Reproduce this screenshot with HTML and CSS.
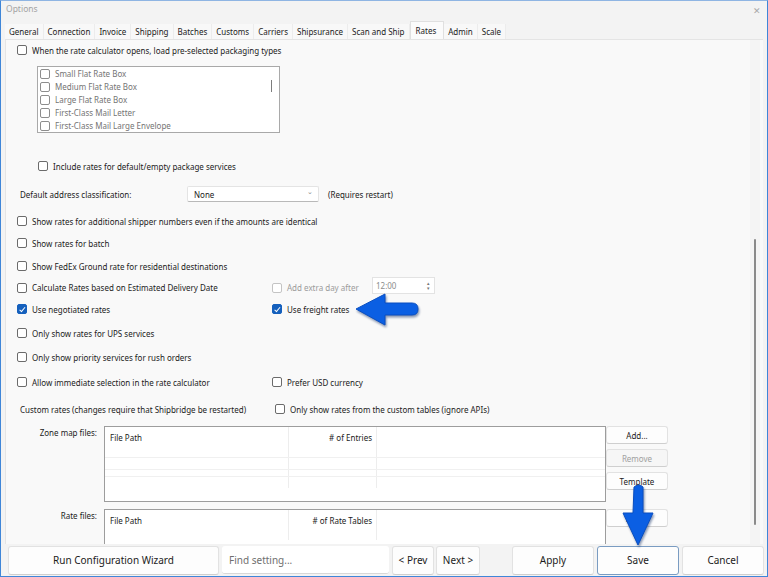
FILE: index.html
```html
<!DOCTYPE html>
<html lang="en">
<head>
    <meta charset="UTF-8">
    <meta name="viewport" content="width=device-width, initial-scale=1.0">
    <title>Options</title>
    <link rel="stylesheet" href="styles.css">
</head>
<body>
<div class="window">
    <div class="titlebar">
        <span class="title">Options</span>
        <span class="close">&#x2715;</span>
    </div>

    <div class="tabs">
        <span class="tab">General</span>
        <span class="tab">Connection</span>
        <span class="tab">Invoice</span>
        <span class="tab">Shipping</span>
        <span class="tab">Batches</span>
        <span class="tab">Customs</span>
        <span class="tab">Carriers</span>
        <span class="tab">Shipsurance</span>
        <span class="tab">Scan and Ship</span>
        <span class="tab active">Rates</span>
        <span class="tab">Admin</span>
        <span class="tab">Scale</span>
    </div>

    <div class="panel">
        <div class="content">
            <label class="row first"><span class="cb"></span>When the rate calculator opens, load pre-selected packaging types</label>

            <div class="listbox">
                <div class="item"><span class="cb"></span>Small Flat Rate Box</div>
                <div class="item"><span class="cb"></span>Medium Flat Rate Box</div>
                <div class="item"><span class="cb"></span>Large Flat Rate Box</div>
                <div class="item"><span class="cb"></span>First-Class Mail Letter</div>
                <div class="item"><span class="cb"></span>First-Class Mail Large Envelope</div>
                <div class="list-thumb"></div>
            </div>

            <label class="row indent mt-lg"><span class="cb"></span>Include rates for default/empty package services</label>

            <div class="row mt-6">
                <span class="field-label">Default address classification:</span>
                <div class="select"><span>None</span><span class="chev">&#x2304;</span></div>
                <span class="hint">(Requires restart)</span>
            </div>

            <label class="row mt-5"><span class="cb"></span>Show rates for additional shipper numbers even if the amounts are identical</label>
            <label class="row"><span class="cb"></span>Show rates for batch</label>
            <label class="row mt-1"><span class="cb"></span>Show FedEx Ground rate for residential destinations</label>

            <div class="row short">
                <label class="col"><span class="cb"></span>Calculate Rates based on Estimated Delivery Date</label>
                <label class="col disabled"><span class="cb"></span>Add extra day after</label>
                <div class="time"><span>12:00</span><span class="spin">&#x25B4;<br>&#x25BE;</span></div>
            </div>

            <div class="row">
                <label class="col"><span class="cb checked"></span>Use negotiated rates</label>
                <label class="col"><span class="cb checked"></span>Use freight rates</label>
            </div>

            <label class="row mt-2"><span class="cb"></span>Only show rates for UPS services</label>
            <label class="row mt-2"><span class="cb"></span>Only show priority services for rush orders</label>

            <div class="row mt-3">
                <label class="col"><span class="cb"></span>Allow immediate selection in the rate calculator</label>
                <label class="col"><span class="cb"></span>Prefer USD currency</label>
            </div>

            <div class="row mt-5">
                <span class="col plain">Custom rates (changes require that Shipbridge be restarted)</span>
                <label class="col"><span class="cb"></span>Only show rates from the custom tables (ignore APIs)</label>
            </div>

            <div class="files mt-6">
                <span class="files-label">Zone map files:</span>
                <div class="grid">
                    <div class="grid-head">
                        <span class="c1">File Path</span>
                        <span class="c2"># of Entries</span>
                        <span class="c3"></span>
                    </div>
                    <div class="grid-row tall"><span class="c1"></span><span class="c2"></span><span class="c3"></span></div>
                    <div class="grid-row"><span class="c1"></span><span class="c2"></span><span class="c3"></span></div>
                    <div class="grid-row short"><span class="c1"></span><span class="c2"></span><span class="c3"></span></div>
                    <div class="grid-row"><span class="c1"></span><span class="c2"></span><span class="c3"></span></div>
                </div>
                <div class="side-buttons">
                    <button class="small">Add...</button>
                    <button class="small" disabled>Remove</button>
                    <button class="small">Template</button>
                </div>
            </div>

            <div class="files mt-7">
                <span class="files-label">Rate files:</span>
                <div class="grid">
                    <div class="grid-head">
                        <span class="c1">File Path</span>
                        <span class="c2"># of Rate Tables</span>
                        <span class="c3"></span>
                    </div>
                    <div class="grid-row tall"><span class="c1"></span><span class="c2"></span><span class="c3"></span></div>
                </div>
                <div class="side-buttons">
                    <button class="small">Add...</button>
                </div>
            </div>
        </div>

        <div class="scrollbar"><div class="thumb"></div></div>
    </div>

    <div class="footer">
        <button class="big wizard">Run Configuration Wizard</button>
        <input class="find" type="text" placeholder="Find setting...">
        <button class="big prev">&lt; Prev</button>
        <button class="big next">Next &gt;</button>
        <span class="spacer"></span>
        <button class="big action">Apply</button>
        <button class="big action save">Save</button>
        <button class="big action">Cancel</button>
    </div>

    <!-- annotation arrows drawn over the dialog -->
    <svg class="arrow arrow-left" width="70" height="40" viewBox="0 0 70 40">
        <path d="M2 18 L31 3 L31 12 L58 12 Q64 12 64 18 Q64 24 58 24 L31 24 L31 34 Z" fill="#0b5fe3" stroke="#0a4fc0" stroke-width="1" stroke-linejoin="round"/>
    </svg>
    <svg class="arrow arrow-down" width="40" height="70" viewBox="0 0 40 70">
        <path d="M17 4 Q22 0 26 4 L26 30 L36 30 L21 62 L6 30 L16 30 Z" fill="#0b5fe3" stroke="#0a4fc0" stroke-width="1" stroke-linejoin="round"/>
    </svg>
</div>
</body>
</html>
```

FILE: styles.css
```css
body{
    margin: 0;
    font-family: "Noto Sans", "Open Sans", sans-serif;
    font-size: 8px;
    color: #1b1b1b;
    background: #f3f3f3;
}
.window{
    position: relative;
    width: 768px;
    height: 577px;
    box-sizing: border-box;
    border: 1px solid #3f86d8;
    border-top-color: #8fb5e3;
    background: #f3f3f3;
    overflow: hidden;
}
.titlebar{
    height: 21px;
    display: flex;
    align-items: flex-start;
    justify-content: space-between;
    padding: 2px 6px 0 5px;
    box-sizing: border-box;
}
.title{
    color: #a3a3a3;
    font-size: 8.5px;
}
.close{
    color: #a8a8a8;
    font-size: 9px;
    margin-top: 1px;
}
.tabs{
    display: flex;
    margin-left: 4px;
    height: 17px;
    align-items: flex-end;
}
.tab{
    height: 15px;
    line-height: 16px;
    padding: 0 4px;
    background: #f8f8f8;
    border-right: 1px solid #ececec;
    color: #222;
}
.tab.active{
    height: 17px;
    line-height: 17px;
    background: #fbfbfb;
    border: 1px solid #e0e0e0;
    border-bottom: none;
    padding: 0 7px 0 5px;
}
.panel{
    display: flex;
    margin-left: 4px;
    width: 758px;
    height: 505px;
    background: #f9f9f9;
    border-top: 1px solid #e4e4e4;
    border-left: 1px solid #e4e4e4;
    box-sizing: border-box;
}
.content{
    flex: 1;
    padding: 1px 0 0 11px;
    overflow: hidden;
}
.scrollbar{
    width: 10px;
    margin-right: 3px;
    background: #f4f4f4;
    position: relative;
}
.thumb{
    position: absolute;
    left: 4px;
    top: 199px;
    width: 2px;
    height: 286px;
    background: #8a8a8a;
    border-radius: 1px;
}
.row{
    display: flex;
    align-items: center;
    height: 22px;
}
.row.first{
    height: 18px;
}
.row.short{
    height: 21px;
}
.indent{
    padding-left: 21px;
}
.mt-lg{ margin-top: 22px; }
.mt-1{ margin-top: 1px; }
.mt-2{ margin-top: 2px; }
.mt-3{ margin-top: 3px; }
.mt-5{ margin-top: 5px; }
.mt-6{ margin-top: 6px; }
.mt-7{ margin-top: 7px; }
.cb{
    display: inline-block;
    width: 8px;
    height: 8px;
    border: 1px solid #6b6b6b;
    border-radius: 2px;
    background: #fff;
    margin-right: 5px;
    position: relative;
    flex-shrink: 0;
}
.cb.checked{
    background: #1560bd;
    border-color: #1560bd;
}
.cb.checked::after{
    content: "";
    position: absolute;
    left: 2.5px;
    top: 0.5px;
    width: 2px;
    height: 4.5px;
    border: solid #fff;
    border-width: 0 1px 1px 0;
    transform: rotate(40deg);
}
.col{
    display: flex;
    align-items: center;
    width: 255px;
}
.col.plain{
    padding-left: 3px;
}
.disabled{
    color: #9b9b9b;
    width: 100px;
}
.disabled .cb{
    border-color: #c4c4c4;
}
.listbox{
    position: relative;
    margin: 7px 0 0 20px;
    width: 243px;
    height: 67px;
    box-sizing: border-box;
    border: 1px solid #a9a9a9;
    background: #fff;
    padding: 0 0 0 2px;
}
.item{
    display: flex;
    align-items: center;
    height: 13px;
    color: #747474;
}
.item .cb{
    border-color: #8d8d8d;
}
.list-thumb{
    position: absolute;
    right: 7px;
    top: 13px;
    width: 1px;
    height: 12px;
    background: #7d7d7d;
}
.field-label{
    width: 167px;
    padding-left: 3px;
}
.select{
    display: flex;
    justify-content: space-between;
    align-items: center;
    width: 132px;
    height: 16px;
    box-sizing: border-box;
    padding: 0 5px 0 6px;
    background: #fff;
    border: 1px solid #e4e4e4;
    border-bottom-color: #b9b9b9;
    border-radius: 2px;
}
.chev{
    color: #8a8a8a;
    font-size: 7px;
    margin-top: -5px;
}
.hint{
    margin-left: 9px;
}
.time{
    display: flex;
    justify-content: space-between;
    align-items: center;
    width: 63px;
    height: 17px;
    box-sizing: border-box;
    padding: 0 4px 0 3px;
    background: #fff;
    border: 1px solid #e3e3e3;
    color: #8c8c8c;
    margin-top: -4px;
}
.spin{
    font-size: 5px;
    line-height: 5px;
    color: #777;
}
.files{
    display: flex;
    align-items: flex-start;
}
.files-label{
    width: 80px;
    text-align: right;
    padding-top: 1px;
    margin-right: 7px;
}
.grid{
    width: 502px;
    height: 76px;
    box-sizing: border-box;
    background: #fff;
    border: 1px solid #9d9d9d;
}
.grid-head, .grid-row{
    display: flex;
}
.grid-head{
    height: 20px;
    align-items: center;
}
.grid-row{
    height: 11px;
    border-top: 1px solid #f0f0f0;
}
.grid-row.tall{
    height: 10px;
    border-top: none;
}
.grid-row.short{
    height: 6px;
}
.c1{
    width: 184px;
    padding-left: 5px;
    box-sizing: border-box;
    border-right: 1px solid #ededed;
    align-self: stretch;
    display: flex;
    align-items: center;
}
.c2{
    width: 88px;
    padding-right: 4px;
    box-sizing: border-box;
    border-right: 1px solid #ededed;
    align-self: stretch;
    display: flex;
    align-items: center;
    justify-content: flex-end;
}
.c3{
    flex: 1;
}
.side-buttons{
    display: flex;
    flex-direction: column;
    gap: 5px;
}
button{
    font-family: inherit;
    color: #1b1b1b;
    background: #fdfdfd;
    border: 1px solid #e2e2e2;
    border-bottom-color: #cfcfcf;
    border-radius: 3px;
    cursor: pointer;
}
button.small{
    width: 62px;
    height: 18px;
    font-size: 8px;
    padding: 0;
}
button:disabled{
    color: #a0a0a0;
    background: #f6f6f6;
}
.footer{
    display: flex;
    align-items: center;
    height: 30px;
    padding: 1px 0 0 7px;
    gap: 3px;
}
button.big{
    height: 29px;
    font-size: 10px;
    padding: 0;
}
.wizard{
    width: 211px;
}
.find{
    width: 167px;
    height: 28px;
    box-sizing: border-box;
    border: none;
    border-bottom: 1px solid #d8d8d8;
    border-radius: 3px;
    background: #fff;
    font-family: inherit;
    font-size: 10px;
    padding: 0 7px;
}
.find::placeholder{
    color: #6f6f6f;
}
.prev{
    width: 42px;
}
.next{
    width: 44px;
    margin-left: -1px;
}
.spacer{
    width: 26px;
}
.action{
    width: 82px;
}
.save{
    border-color: #7a9cc2;
}
.arrow{
    position: absolute;
    filter: drop-shadow(1px 2px 1px rgba(0, 30, 90, 0.45));
}
.arrow-left{
    left: 353px;
    top: 290px;
}
.arrow-down{
    left: 616px;
    top: 482px;
}
```
